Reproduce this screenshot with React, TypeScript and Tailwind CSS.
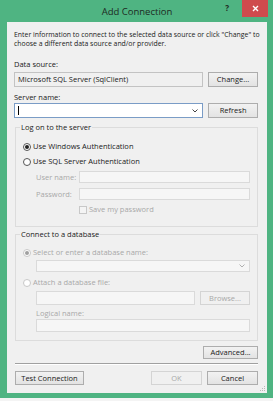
import React from 'react';

const font = { fontFamily: '"Open Sans", "Noto Sans", sans-serif' };

function Btn({ label, w, disabled }: { label: string; w: string; disabled?: boolean }) {
  return (
    <div
      className={`${w} h-full flex items-center justify-center border ${
        disabled
          ? 'border-[#d4d4d4] bg-[#f0f0f0] text-[#a8a8a8]'
          : 'border-[#adadad] bg-gradient-to-b from-[#f2f2f2] to-[#e3e3e3] text-[#1a1a1a]'
      }`}
    >
      {label}
    </div>
  );
}

function Radio({ checked, disabled }: { checked?: boolean; disabled?: boolean }) {
  return (
    <div
      className={`w-[8px] h-[8px] rounded-full border flex items-center justify-center bg-white ${
        disabled ? 'border-[#c8c8c8]' : 'border-[#555]'
      }`}
    >
      {checked && <div className={`w-[4px] h-[4px] rounded-full ${disabled ? 'bg-[#a0a0a0]' : 'bg-[#222]'}`} />}
    </div>
  );
}

function Chevron({ color }: { color: string }) {
  return (
    <svg width="6" height="4" viewBox="0 0 6 4">
      <path d="M0.5 0.5 L3 3 L5.5 0.5" stroke={color} strokeWidth="1" fill="none" />
    </svg>
  );
}

export default function App() {
  return (
    <div className="w-[273px] h-[401px] bg-[#f4f4f4] text-[7.5px] leading-[9px]" style={font}>
      <div className="h-[398px] bg-[#4fb482] pl-[7px] pr-[6px] pb-[5px] flex flex-col">
        {/* title bar */}
        <div className="h-[22px] relative flex items-center justify-center">
          <span className="text-[9.5px] text-[#1e2a22]">Add Connection</span>
          <span className="absolute top-[3px] right-[38px] text-[8px] font-bold text-[#1e2a22]">?</span>
          <div className="absolute top-0 right-[-1px] w-[26px] h-[17px] bg-[#cf4b4d] flex items-center justify-center">
            <svg width="7" height="7" viewBox="0 0 7 7">
              <path d="M1 1 L6 6 M6 1 L1 6" stroke="#fff" strokeWidth="1.4" />
            </svg>
          </div>
        </div>

        {/* content */}
        <div className="h-[371px] bg-[#f0f0f0] pl-[7px] pr-[9px] pt-[8px] text-[#1a1a1a] flex flex-col relative">
          <p className="whitespace-nowrap text-[6.9px]">
            Enter information to connect to the selected data source or click "Change" to
            <br />
            choose a different data source and/or provider.
          </p>

          <div className="mt-[12px]">Data source:</div>
          <div className="mt-[3px] h-[15px] flex gap-[5px]">
            <div className="w-[189px] h-full border border-[#c3c3c3] bg-[#f0f0f0] flex items-center pl-[3px]">
              Microsoft SQL Server (SqlClient)
            </div>
            <Btn label="Change..." w="w-[50px]" />
          </div>

          <div className="mt-[6px]">Server name:</div>
          <div className="mt-[1px] h-[15px] flex gap-[5px]">
            <div className="w-[190px] h-full border border-[#7a9cc6] bg-white flex items-center justify-between pl-[3px] pr-[4px]">
              <div className="w-px h-[9px] bg-black" />
              <Chevron color="#444" />
            </div>
            <Btn label="Refresh" w="w-[50px]" />
          </div>

          {/* Log on group */}
          <div className="mt-[9px] ml-[1px] h-[100px] border border-[#dcdcdc] relative flex flex-col pl-[7px] pr-[7px]">
            <span className="absolute top-[-5px] left-[4px] bg-[#f0f0f0] px-[1px]">Log on to the server</span>
            <div className="mt-[14px] flex items-center gap-[2px]">
              <Radio checked />
              <span>Use Windows Authentication</span>
            </div>
            <div className="mt-[6px] flex items-center gap-[2px]">
              <Radio />
              <span>Use SQL Server Authentication</span>
            </div>
            <div className="mt-[5px] ml-[13px] h-[12px] flex items-center text-[#a8a8a8]">
              <span className="w-[43px]">User name:</span>
              <div className="flex-1 h-full border border-[#dadada] bg-[#f6f6f6]" />
            </div>
            <div className="mt-[5px] ml-[13px] h-[12px] flex items-center text-[#a8a8a8]">
              <span className="w-[43px]">Password:</span>
              <div className="flex-1 h-full border border-[#dadada] bg-[#f6f6f6]" />
            </div>
            <div className="mt-[5px] ml-[56px] flex items-center gap-[2px] text-[#a8a8a8]">
              <div className="w-[8px] h-[8px] border border-[#c8c8c8] bg-[#f4f4f4]" />
              <span>Save my password</span>
            </div>
          </div>

          {/* Connect group */}
          <div className="mt-[7px] ml-[1px] h-[107px] border border-[#dcdcdc] relative flex flex-col pl-[7px] pr-[7px] text-[#a8a8a8]">
            <span className="absolute top-[-5px] left-[4px] bg-[#f0f0f0] px-[1px] text-[#1a1a1a]">Connect to a database</span>
            <div className="mt-[13px] flex items-center gap-[2px]">
              <Radio checked disabled />
              <span>Select or enter a database name:</span>
            </div>
            <div className="mt-[3px] ml-[13px] h-[12px] border border-[#dadada] bg-[#f6f6f6] flex items-center justify-end pr-[4px]">
              <Chevron color="#b0b0b0" />
            </div>
            <div className="mt-[6px] flex items-center gap-[2px]">
              <Radio disabled />
              <span>Attach a database file:</span>
            </div>
            <div className="mt-[4px] ml-[13px] h-[14px] flex gap-[5px]">
              <div className="w-[159px] h-full border border-[#dadada] bg-[#f6f6f6]" />
              <Btn label="Browse..." w="w-[50px]" disabled />
            </div>
            <div className="mt-[4px] ml-[13px]">Logical name:</div>
            <div className="mt-[1px] ml-[13px] h-[13px] border border-[#dadada] bg-[#f6f6f6]" />
          </div>

          <div className="mt-[5px] h-[13px] flex justify-end">
            <Btn label="Advanced..." w="w-[55px]" />
          </div>

          <div className="mt-[4px] ml-[1px] h-[2px] border-t border-[#a0a0a0] border-b border-b-white" />

          <div className="mt-[6px] ml-[1px] h-[14px] flex">
            <Btn label="Test Connection" w="w-[69px]" />
            <div className="flex-1" />
            <Btn label="OK" w="w-[51px]" disabled />
            <div className="w-[5px]" />
            <Btn label="Cancel" w="w-[51px]" />
          </div>

          {/* resize grip */}
          <svg className="absolute right-[1px] bottom-[1px]" width="6" height="6" viewBox="0 0 6 6">
            <rect x="4" y="0" width="1" height="1" fill="#b8b8b8" />
            <rect x="2" y="2" width="1" height="1" fill="#b8b8b8" />
            <rect x="4" y="2" width="1" height="1" fill="#b8b8b8" />
            <rect x="0" y="4" width="1" height="1" fill="#b8b8b8" />
            <rect x="2" y="4" width="1" height="1" fill="#b8b8b8" />
            <rect x="4" y="4" width="1" height="1" fill="#b8b8b8" />
          </svg>
        </div>
      </div>
    </div>
  );
}
